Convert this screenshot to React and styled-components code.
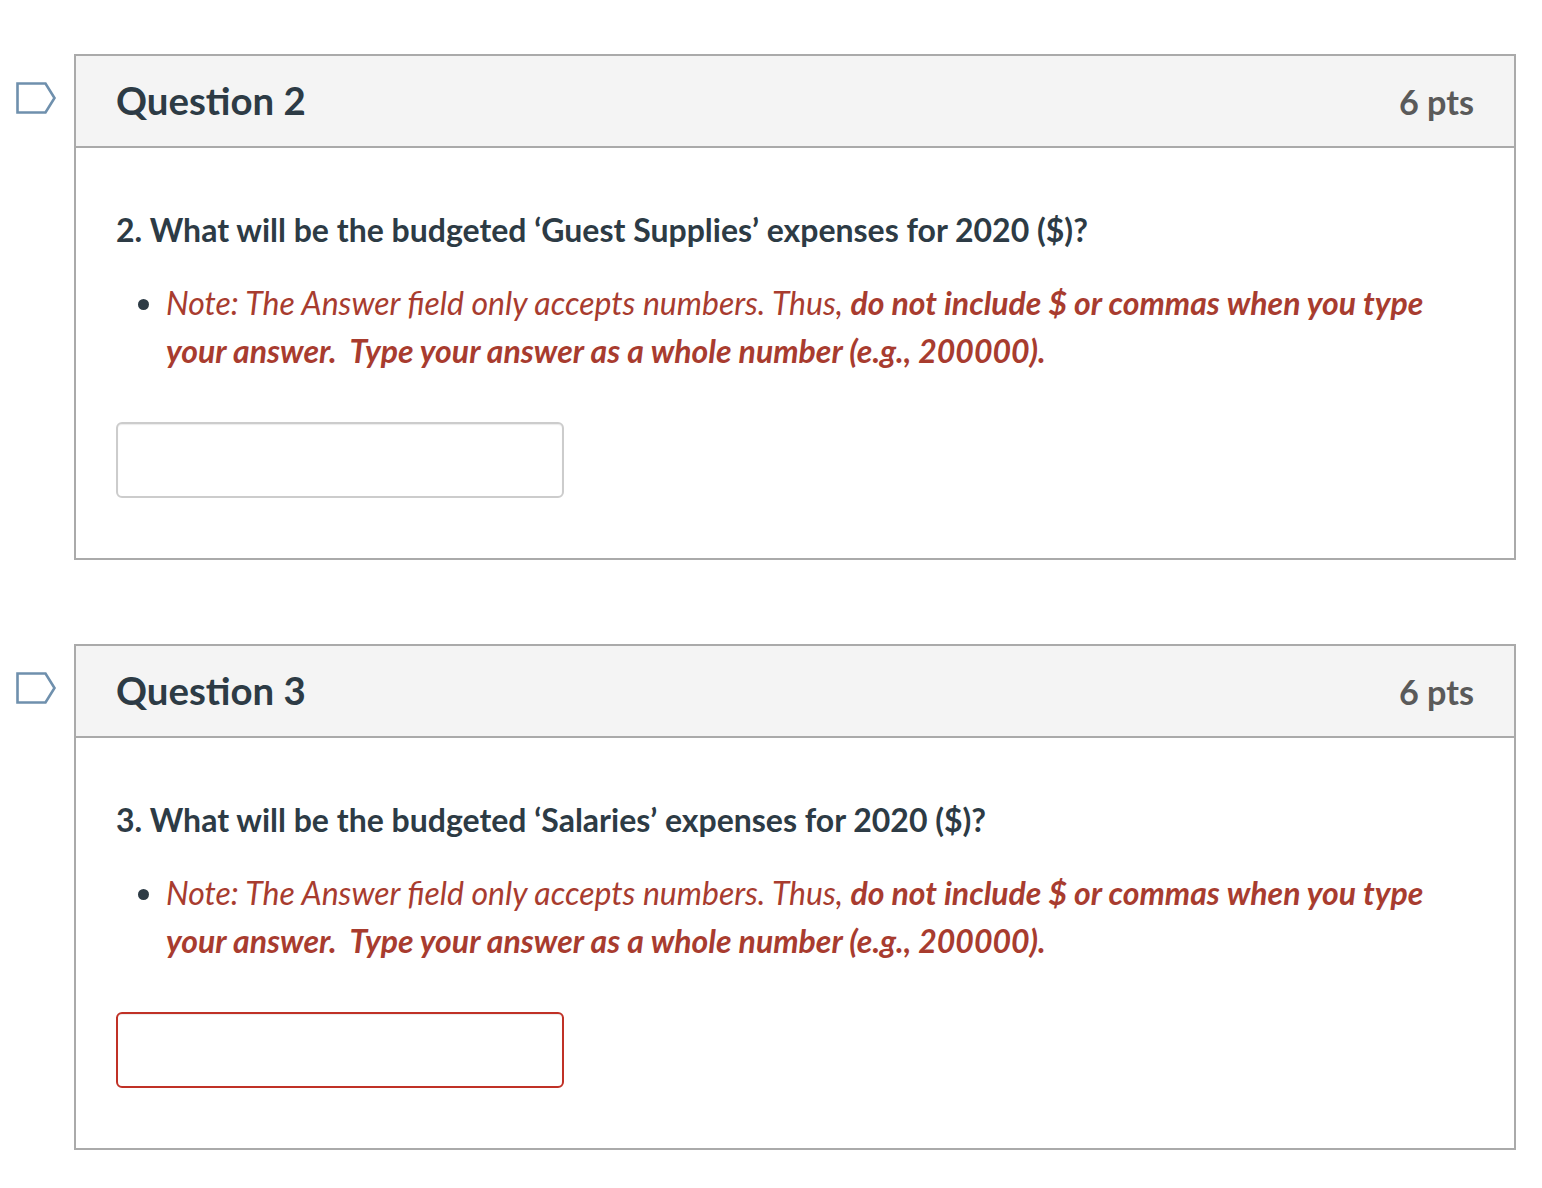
import React from 'react';
import styled, { createGlobalStyle } from 'styled-components';

const GlobalStyle = createGlobalStyle`
    html, body {
        margin: 0;
        padding: 0;
        background: #fff;
        font-family: Lato, "Liberation Sans", sans-serif;
    }
`;

const Page = styled.div`
    display: flex;
    flex-direction: column;
    gap: 84px;
    padding: 54px 26px 38px 74px;
`;

const Question = styled.section`
    position: relative;
    border: 2px solid #aaa;
    height: 506px;
    box-sizing: border-box;
`;

const Flag = styled.svg`
    position: absolute;
    left: -60px;
    top: 25px;
    width: 42px;
    height: 34px;
`;

const Header = styled.header`
    display: flex;
    justify-content: space-between;
    align-items: center;
    height: 92px;
    box-sizing: border-box;
    padding: 0 40px;
    background: #f4f4f4;
    border-bottom: 2px solid #aaa;
`;

const Title = styled.h2`
    margin: 0 0 2px;
    font-size: 38.4px;
    font-weight: 700;
    color: #2d3b45;
`;

const Points = styled.div`
    font-size: 34.2px;
    font-weight: 700;
    color: #5a5a5a;
`;

const Body = styled.div`
    padding: 58px 40px 0;
`;

const Prompt = styled.p`
    margin: 0;
    font-size: 32px;
    line-height: 48px;
    font-weight: 700;
    color: #2d3b45;
`;

const NoteList = styled.ul`
    margin: 25px 0 0;
    padding: 0 0 0 50px;
    font-size: 32px;
    line-height: 48px;
    color: #2d3b45;
`;

const Note = styled.li`
    em {
        color: #a83c2f;
        font-style: italic;
    }
    strong {
        font-weight: 700;
    }
`;

const Answer = styled.input`
    display: block;
    width: 448px;
    height: 76px;
    margin-top: 47px;
    box-sizing: border-box;
    background: #fff;
    border: 2px solid ${props => (props.$error ? '#c03126' : '#ccc')};
    border-radius: 6px;
    box-shadow: inset 0 1px 1px rgba(0, 0, 0, 0.08);
    outline: none;
`;

const questions = [
    { number: 2, item: 'Guest Supplies', error: false },
    { number: 3, item: 'Salaries', error: true },
];

const App = () => (
    <>
        <GlobalStyle />
        <Page>
            {questions.map(q => (
                <Question key={q.number}>
                    <Flag viewBox="0 0 42 34" fill="none">
                        <path d="M1.5 2.5H29.5L38.5 17L29.5 31.5H1.5Z" stroke="#6f90ad" strokeWidth="2.6" />
                    </Flag>
                    <Header>
                        <Title>Question {q.number}</Title>
                        <Points>6 pts</Points>
                    </Header>
                    <Body>
                        <Prompt>
                            {q.number}. What will be the budgeted ‘{q.item}’ expenses for 2020 ($)?
                        </Prompt>
                        <NoteList>
                            <Note>
                                <em>
                                    Note: The Answer field only accepts numbers. Thus,{' '}
                                    <strong>
                                        do not include $ or commas when you type your answer.&nbsp; Type your
                                        answer as a whole number (e.g., 200000).
                                    </strong>
                                </em>
                            </Note>
                        </NoteList>
                        <Answer type="text" $error={q.error} />
                    </Body>
                </Question>
            ))}
        </Page>
    </>
);

export default App;
